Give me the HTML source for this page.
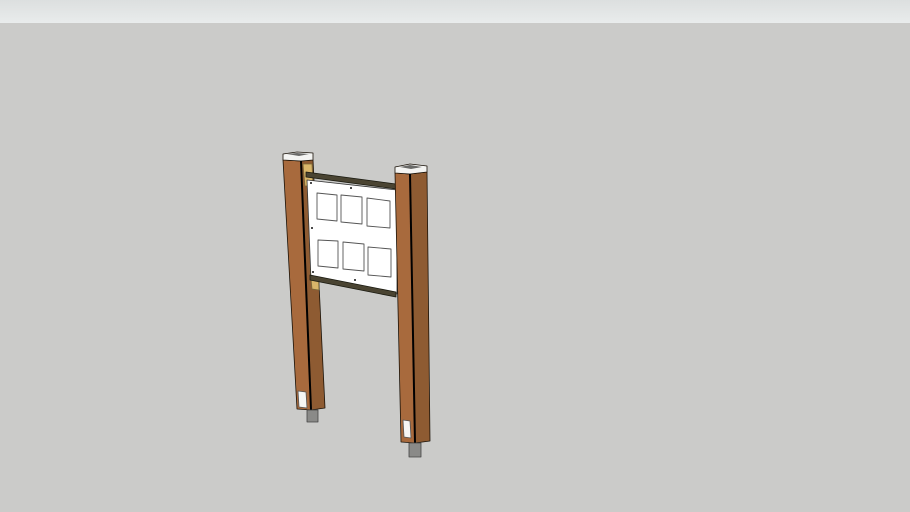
<!DOCTYPE html>
<html><head><meta charset="utf-8"><style>
html,body{margin:0;padding:0;width:910px;height:512px;overflow:hidden;background:#cbcbc9}
.top{position:absolute;left:0;top:0;width:910px;height:23px;background:linear-gradient(#dcdfdf,#e9ecec)}
svg{position:absolute;left:0;top:0}
</style></head><body>
<div class="top"></div>
<svg width="910" height="512" viewBox="0 0 910 512">
<g stroke="#1a1208" stroke-width="0.8" stroke-linejoin="round">
<!-- left post -->
<polygon points="283,160 301,161 311,410 297,409" fill="#a86a3d"/>
<polygon points="301,161 313,160 325,408 311,410" fill="#8e5b32"/>
<polygon points="283,154 297,152 313,153 313,160 301,161 283,160" fill="#f4f4f2"/>
<polygon points="287,154 297,153 309,154 299,156" fill="#6a6a68" stroke="none"/>
<line x1="301" y1="161" x2="311" y2="410" stroke="#000" stroke-width="2"/>
<polygon points="298,391 306,392 307,408 299,407" fill="#f6f6f4" stroke="#555"/>
<rect x="307" y="410" width="11" height="12" fill="#8a8a88" stroke="#444"/>
<!-- brackets -->
<polygon points="303,164 312,164 313,186 305,186" fill="#d9b66a" stroke="#7a6a3a"/>
<polygon points="310,268 318,269 319,290 312,289" fill="#d9b66a" stroke="#7a6a3a"/>
<!-- panel -->
<polygon points="307,180 397,190 397,294 311,280" fill="#ffffff" stroke="#333"/>
<g fill="#fff" stroke="#555" stroke-width="0.9">
<polygon points="317,193 337,195 337,221 317,219"/>
<polygon points="341,195 362,197 362,224 341,222"/>
<polygon points="367,198 390,201 390,228 367,226"/>
<polygon points="318,240 338,241 338,268 318,266"/>
<polygon points="343,242 364,244 364,271 343,269"/>
<polygon points="368,247 391,249 391,277 368,275"/>
</g>
<g fill="#111" stroke="none">
<circle cx="311" cy="183" r="1"/><circle cx="351" cy="188" r="1"/><circle cx="312" cy="228" r="1"/>
<circle cx="313" cy="272" r="1"/><circle cx="355" cy="280" r="1"/>
</g>
<!-- rods -->
<polygon points="306,172 396,184 396,189 306,177" fill="#4a4432" stroke="#1a1a10"/>
<polygon points="310,275 396,292 396,297 310,280" fill="#4a4432" stroke="#1a1a10"/>
<!-- right post -->
<polygon points="395,173 410,174 415,443 401,442" fill="#a86a3d"/>
<polygon points="410,174 427,172 430,441 415,443" fill="#8e5b32"/>
<polygon points="395,167 410,164 427,166 427,172 410,174 395,173" fill="#f4f4f2"/>
<polygon points="400,167 410,165 422,167 411,169" fill="#6a6a68" stroke="none"/>
<line x1="410" y1="174" x2="415" y2="443" stroke="#000" stroke-width="2"/>
<polygon points="403,420 410,421 411,438 404,437" fill="#f6f6f4" stroke="#555"/>
<rect x="409" y="443" width="12" height="14" fill="#8a8a88" stroke="#444"/>
</g>
</svg>
</body></html>
